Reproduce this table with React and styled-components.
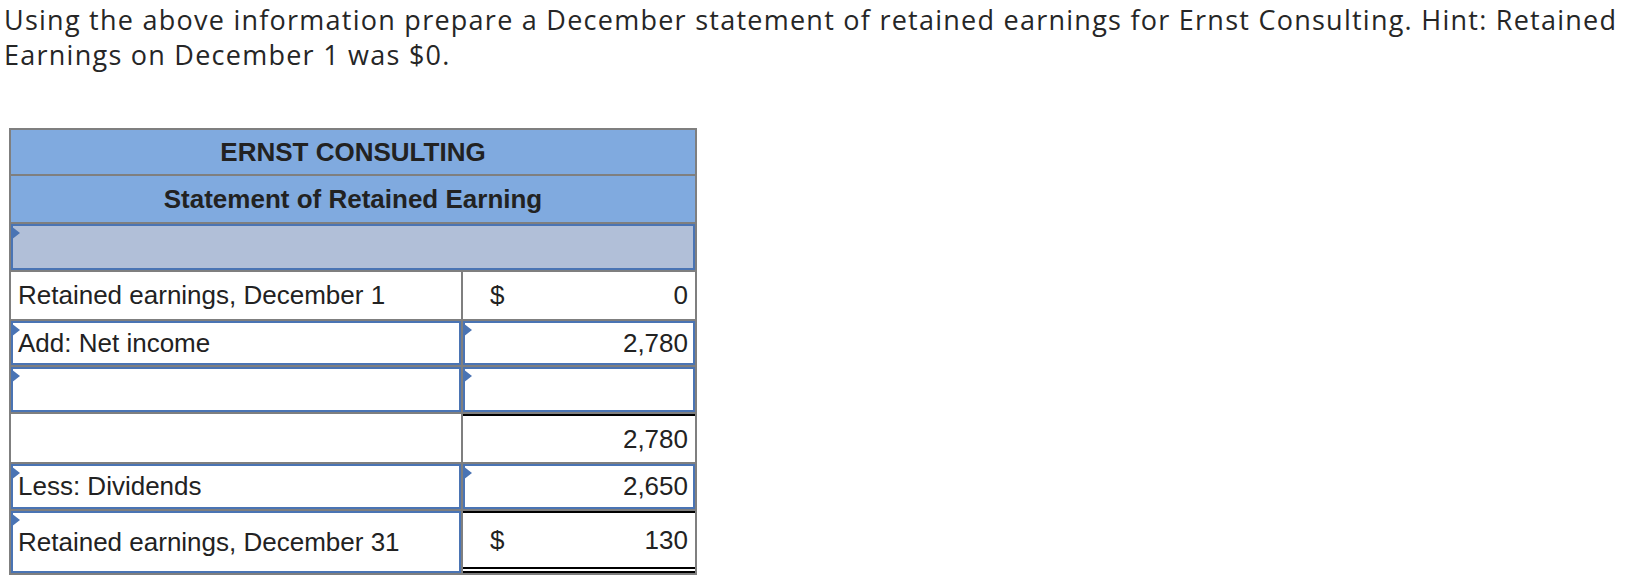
import React from "react";
import styled, { createGlobalStyle } from "styled-components";

const GlobalStyle = createGlobalStyle`
  body {
    margin: 0;
    background: #fff;
  }
`;

const Page = styled.div`
  width: 1632px;
  height: 586px;
  overflow: hidden;
`;

const Question = styled.p`
  margin: 0;
  padding: 2px 0 0 4px;
  font-family: "Open Sans", "Lato", sans-serif;
  font-size: 27px;
  line-height: 35px;
  letter-spacing: 1.25px;
  color: #262626;
  white-space: nowrap;
`;

const Sheet = styled.div`
  display: grid;
  grid-template-columns: 450px 232px;
  grid-template-rows: 44px 46px 46px 47px 44px 45px 48px 45px 62px;
  gap: 2px;
  padding: 2px;
  width: fit-content;
  margin: 56px 0 0 9px;
  background: #7f7f7f;
  font-family: "Liberation Sans", Arial, sans-serif;
  font-size: 26px;
  color: #222;
`;

const Title = styled.div`
  grid-column: 1 / -1;
  display: flex;
  align-items: center;
  justify-content: center;
  background: #80aadf;
  font-weight: bold;
`;

const Cell = styled.div`
  position: relative;
  box-sizing: border-box;
  display: flex;
  align-items: center;
  justify-content: ${(p) => (p.$amount ? (p.$dollar ? "space-between" : "flex-end") : "flex-start")};
  padding: ${(p) => (p.$dollar ? "0 7px 0 27px" : "0 7px")};
  background: #fff;
  border-top: ${(p) => (p.$rule ? "2px solid #000" : "none")};
  border-bottom: ${(p) => (p.$total ? "6px double #000" : "none")};
`;

const Input = styled.div`
  position: relative;
  box-sizing: border-box;
  grid-column: ${(p) => (p.$wide ? "1 / -1" : "auto")};
  display: flex;
  align-items: center;
  justify-content: ${(p) => (p.$amount ? "flex-end" : "flex-start")};
  padding: 0 5px;
  background: ${(p) => (p.$shade ? "#b1bfd8" : "#fff")};
  border: 2px solid #4a74b4;
`;

const Flag = styled.span`
  position: absolute;
  top: 0;
  left: -2px;
  width: 0;
  height: 0;
  border-left: 9px solid #4a74b4;
  border-top: 7px solid transparent;
  border-bottom: 7px solid transparent;
`;

const Field = ({ children, ...rest }) => (
  <Input {...rest}>
    <Flag />
    {children}
  </Input>
);

export default function App() {
  return (
    <Page>
      <GlobalStyle />
      <Question>
        Using the above information prepare a December statement of retained earnings for Ernst Consulting. Hint: Retained
        <br />
        Earnings on December 1 was $0.
      </Question>
      <Sheet>
        <Title>ERNST CONSULTING</Title>
        <Title>Statement of Retained Earning</Title>
        <Field $wide $shade />

        <Cell>Retained earnings, December 1</Cell>
        <Cell $amount $dollar>
          <span>$</span>
          <span>0</span>
        </Cell>

        <Field>Add: Net income</Field>
        <Field $amount>2,780</Field>

        <Field />
        <Field $amount />

        <Cell />
        <Cell $amount $rule>2,780</Cell>

        <Field>Less: Dividends</Field>
        <Field $amount>2,650</Field>

        <Field>Retained earnings, December 31</Field>
        <Cell $amount $dollar $rule $total>
          <span>$</span>
          <span>130</span>
        </Cell>
      </Sheet>
    </Page>
  );
}
